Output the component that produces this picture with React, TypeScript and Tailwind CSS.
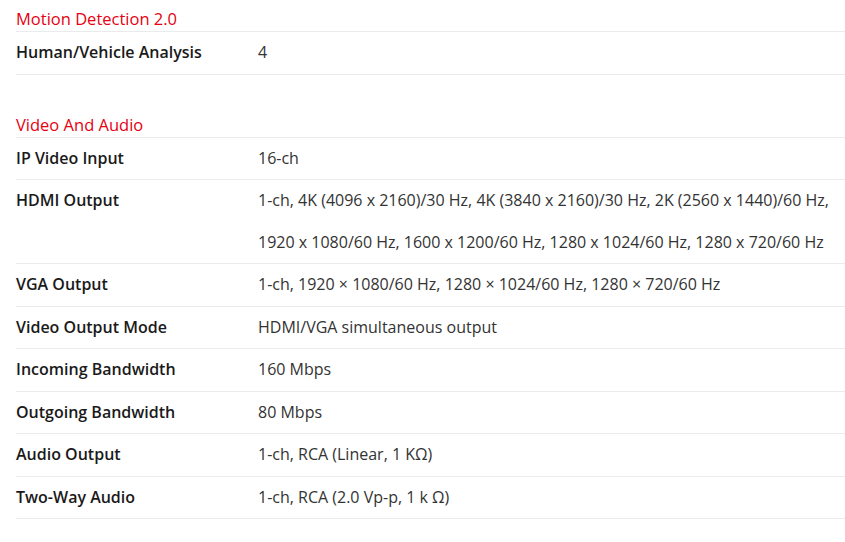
type SpecRow = { label: string; value: string[] };

type SpecSection = { title: string; rows: SpecRow[] };

const sections: SpecSection[] = [
  {
    title: 'Motion Detection 2.0',
    rows: [{ label: 'Human/Vehicle Analysis', value: ['4'] }],
  },
  {
    title: 'Video And Audio',
    rows: [
      { label: 'IP Video Input', value: ['16-ch'] },
      {
        label: 'HDMI Output',
        value: [
          '1-ch, 4K (4096 x 2160)/30 Hz, 4K (3840 x 2160)/30 Hz, 2K (2560 x 1440)/60 Hz,',
          '1920 x 1080/60 Hz, 1600 x 1200/60 Hz, 1280 x 1024/60 Hz, 1280 x 720/60 Hz',
        ],
      },
      { label: 'VGA Output', value: ['1-ch, 1920 × 1080/60 Hz, 1280 × 1024/60 Hz, 1280 × 720/60 Hz'] },
      { label: 'Video Output Mode', value: ['HDMI/VGA simultaneous output'] },
      { label: 'Incoming Bandwidth', value: ['160 Mbps'] },
      { label: 'Outgoing Bandwidth', value: ['80 Mbps'] },
      { label: 'Audio Output', value: ['1-ch, RCA (Linear, 1 KΩ)'] },
      { label: 'Two-Way Audio', value: ['1-ch, RCA (2.0 Vp-p, 1 k Ω)'] },
    ],
  },
];

function Section({ section }: { section: SpecSection }) {
  return (
    <div className="[&+&]:mt-[31px]">
      <h3 className="pt-[7px] text-[16.5px] leading-6 font-medium text-[#e60012] border-b border-[#ebebeb]">
        {section.title}
      </h3>
      {section.rows.map((row) => (
        <div key={row.label} className="flex border-b border-[#ebebeb] text-base leading-[41.5px]">
          <div className="w-[242px] shrink-0 font-semibold text-[#1a1a1a]">{row.label}</div>
          <div className="flex-1 text-[#333333]">
            {row.value.map((line) => (
              <div key={line} className="whitespace-nowrap">
                {line}
              </div>
            ))}
          </div>
        </div>
      ))}
    </div>
  );
}

export default function App() {
  return (
    <div className="min-h-screen bg-white pl-4 font-['Open_Sans',sans-serif]">
      {sections.map((s) => (
        <Section key={s.title} section={s} />
      ))}
    </div>
  );
}
